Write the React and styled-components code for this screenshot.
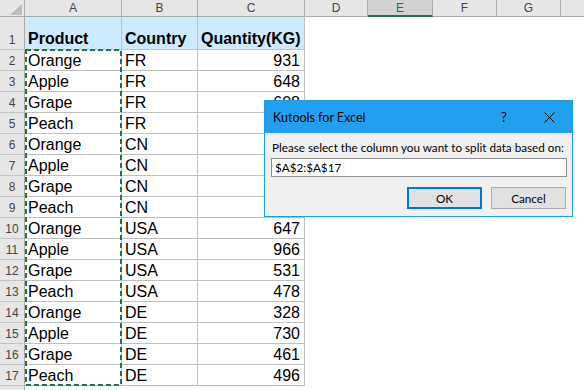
import React from 'react';
import styled, { createGlobalStyle, css } from 'styled-components';

const Global = createGlobalStyle`
  html, body { margin: 0; padding: 0; background: #ffffff; }
  body { font-family: "Liberation Sans", Arial, sans-serif; }
`;

const Sheet = styled.div`
  position: relative;
  width: 584px;
  height: 390px;
  overflow: hidden;
  display: grid;
  grid-template-columns: 25px 97px 76px 107px 63px 65px 64px 64px 64px;
  grid-template-rows: 17px 33px repeat(17, 21px);
  font-family: "Liberation Sans", Arial, sans-serif;
  background: #ffffff;
`;

const ColHead = styled.div`
  box-sizing: border-box;
  background: ${(p) => (p.$active ? '#d2d2d2' : '#e6e6e6')};
  color: ${(p) => (p.$active ? '#217346' : '#444444')};
  border-right: 1px solid #ababab;
  border-bottom: ${(p) => (p.$active ? '2px solid #217346' : '1px solid #ababab')};
  font-size: 12px;
  display: flex;
  align-items: center;
  justify-content: center;
  position: relative;
`;

const Corner = styled(ColHead)`
  align-items: flex-end;
  justify-content: flex-end;
  padding: 0 2px 1px 0;
`;

const RowHead = styled.div`
  box-sizing: border-box;
  background: #e6e6e6;
  color: #444444;
  border-right: 1px solid #ababab;
  border-bottom: 1px solid #c4c4c4;
  font-size: 12px;
  line-height: 14px;
  display: flex;
  align-items: flex-end;
  justify-content: center;
  padding-bottom: 2px;
`;

const Cell = styled.div`
  box-sizing: border-box;
  border-right: 1px solid #bfbfbf;
  border-bottom: 1px solid #bfbfbf;
  font-size: 16px;
  line-height: 18px;
  color: #000000;
  padding: 0 4px 0 3px;
  display: flex;
  align-items: flex-end;
  justify-content: ${(p) => (p.$num ? 'flex-end' : 'flex-start')};
  white-space: nowrap;
  overflow: hidden;
  ${(p) =>
    p.$title &&
    css`
      background: #cdeaff;
      font-weight: bold;
      padding-bottom: 1px;
    `}
`;

const Blank = styled.div``;

const Marquee = styled.svg`
  position: absolute;
  left: 25px;
  top: 49px;
  width: 97px;
  height: 337px;
  pointer-events: none;
`;

const Dialog = styled.div`
  position: absolute;
  left: 264px;
  top: 100px;
  width: 309px;
  height: 117px;
  box-sizing: border-box;
  border: 1px solid #1f9bec;
  background: #f0f0f0;
  display: flex;
  flex-direction: column;
  font-family: Lato, "Open Sans", sans-serif;
  font-size: 11.7px;
  color: #000000;
`;

const TitleBar = styled.div`
  height: 32px;
  flex: none;
  background: #22a0f0;
  display: flex;
  align-items: center;
  padding-left: 8px;
  box-sizing: border-box;
`;

const Title = styled.span`
  flex: 1;
  font-size: 12.5px;
`;

const TitleButton = styled.span`
  width: ${(p) => (p.$close ? '46px' : '44px')};
  height: 32px;
  display: flex;
  align-items: center;
  justify-content: center;
  font-size: 13px;
`;

const Body = styled.div`
  flex: 1;
  display: flex;
  flex-direction: column;
  padding: 7px 5px 0 6px;
`;

const Label = styled.div`
  line-height: 15px;
  padding-left: 1px;
  white-space: nowrap;
`;

const Input = styled.div`
  margin-top: 3px;
  height: 19px;
  box-sizing: border-box;
  border: 1px solid #8f8f8f;
  background: #ffffff;
  padding-left: 3px;
  line-height: 17px;
`;

const Buttons = styled.div`
  display: flex;
  justify-content: flex-end;
  gap: 9px;
  margin-top: 10px;
  padding-right: 1px;
`;

const Button = styled.div`
  width: 75px;
  height: 22px;
  box-sizing: border-box;
  background: #e1e1e1;
  border: ${(p) => (p.$primary ? '2px solid #0078d7' : '1px solid #adadad')};
  display: flex;
  align-items: center;
  justify-content: center;
`;

const cols = ['A', 'B', 'C', 'D', 'E', 'F', 'G', ''];

// Quantities for rows 5-9 are hidden behind the dialog in the screenshot.
const data = [
  ['Orange', 'FR', 931],
  ['Apple', 'FR', 648],
  ['Grape', 'FR', 608],
  ['Peach', 'FR', null],
  ['Orange', 'CN', null],
  ['Apple', 'CN', null],
  ['Grape', 'CN', null],
  ['Peach', 'CN', null],
  ['Orange', 'USA', 647],
  ['Apple', 'USA', 966],
  ['Grape', 'USA', 531],
  ['Peach', 'USA', 478],
  ['Orange', 'DE', 328],
  ['Apple', 'DE', 730],
  ['Grape', 'DE', 461],
  ['Peach', 'DE', 496],
];

const blanks = (key) =>
  [0, 1, 2, 3, 4].map((i) => <Blank key={`${key}-b${i}`} />);

export default function App() {
  return (
    <>
      <Global />
      <Sheet>
        <Corner>
          <svg width="12" height="11" viewBox="0 0 12 11">
            <polygon points="0,11 12,11 12,0" fill="#bcbcbc" />
          </svg>
        </Corner>
        {cols.map((c, i) => (
          <ColHead key={i} $active={c === 'E'}>
            {c}
          </ColHead>
        ))}

        <RowHead>1</RowHead>
        <Cell $title>Product</Cell>
        <Cell $title>Country</Cell>
        <Cell $title>Quantity(KG)</Cell>
        {blanks('r1')}

        {data.map((row, i) => (
          <React.Fragment key={i}>
            <RowHead>{i + 2}</RowHead>
            <Cell>{row[0]}</Cell>
            <Cell>{row[1]}</Cell>
            <Cell $num>{row[2]}</Cell>
            {blanks(`r${i + 2}`)}
          </React.Fragment>
        ))}

        <RowHead />
        <Blank />
        <Blank />
        <Blank />
        {blanks('r18')}

        <Marquee viewBox="0 0 97 337">
          <rect
            x="1"
            y="1"
            width="95"
            height="335"
            fill="none"
            stroke="#217346"
            strokeWidth="2"
            strokeDasharray="5 3"
          />
        </Marquee>

        <Dialog>
          <TitleBar>
            <Title>Kutools for Excel</Title>
            <TitleButton>?</TitleButton>
            <TitleButton $close>
              <svg width="11" height="11" viewBox="0 0 11 11">
                <path d="M0.5 0.5 L10.5 10.5 M10.5 0.5 L0.5 10.5" stroke="#000" strokeWidth="1" />
              </svg>
            </TitleButton>
          </TitleBar>
          <Body>
            <Label>Please select the column you want to split data based on:</Label>
            <Input>$A$2:$A$17</Input>
            <Buttons>
              <Button $primary>OK</Button>
              <Button>Cancel</Button>
            </Buttons>
          </Body>
        </Dialog>
      </Sheet>
    </>
  );
}
